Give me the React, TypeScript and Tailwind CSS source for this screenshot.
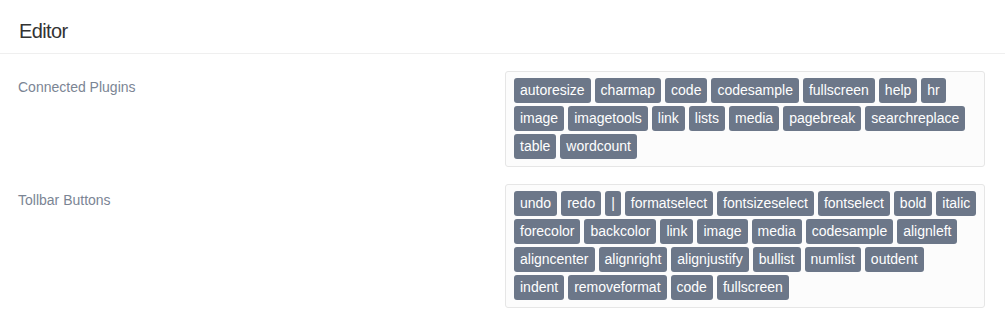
import React from "react";

const plugins = [
  ["autoresize","charmap","code","codesample","fullscreen","help","hr"],
  ["image","imagetools","link","lists","media","pagebreak","searchreplace"],
  ["table","wordcount"],
];
const buttons = [
  ["undo","redo","|","formatselect","fontsizeselect","fontselect","bold","italic"],
  ["forecolor","backcolor","link","image","media","codesample","alignleft"],
  ["aligncenter","alignright","alignjustify","bullist","numlist","outdent"],
  ["indent","removeformat","code","fullscreen"],
];

function Row({ label, rows }: { label: string; rows: string[][] }) {
  return (
    <div className="grid grid-cols-[487px_480px]">
      <div className="pt-[6px] text-[14px] leading-[20px] text-[#7b8594]">{label}</div>
      <div className="flex flex-col gap-y-[3px] rounded-[3px] border border-[#e6e6e6] bg-[#fcfcfc] pt-[6px] pb-[7px] pl-[8px] pr-[8px]">
        {rows.map((r, ri) => (
          <div key={ri} className="flex flex-nowrap gap-x-[4px]">
            {r.map((t, i) => (
              <span key={i} className="h-[25px] rounded-[3px] bg-[#6c7789] px-[6px] text-[14px] leading-[25px] text-white">
                {t}
              </span>
            ))}
          </div>
        ))}
      </div>
    </div>
  );
}

export default function App() {
  return (
    <div className="w-[1005px] h-[327px] bg-white" style={{ fontFamily: '"Liberation Sans", Arial, sans-serif' }}>
      <div className="h-[54px] border-b border-[#efefef] pl-[19px] pt-[19px]">
        <h1 className="text-[20px] leading-[24px] tracking-[-0.6px] text-[#333]">Editor</h1>
      </div>
      <div className="flex flex-col gap-[17px] pl-[18px] pt-[17px]">
        <Row label="Connected Plugins" rows={plugins} />
        <Row label="Tollbar Buttons" rows={buttons} />
      </div>
    </div>
  );
}
